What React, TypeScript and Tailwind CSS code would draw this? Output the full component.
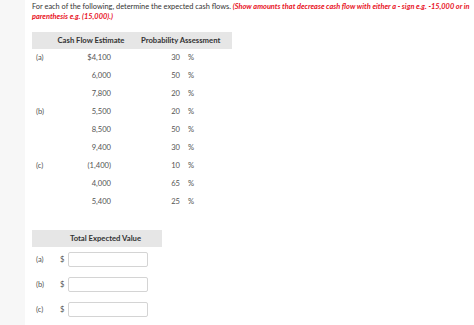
const rows = [
  { label: '(a)', value: '$4,100', pct: '30' },
  { label: '', value: '6,000', pct: '50' },
  { label: '', value: '7,800', pct: '20' },
  { label: '(b)', value: '5,500', pct: '20' },
  { label: '', value: '8,500', pct: '50' },
  { label: '', value: '9,400', pct: '30' },
  { label: '(c)', value: '(1,400)', pct: '10' },
  { label: '', value: '4,000', pct: '65' },
  { label: '', value: '5,400', pct: '25' },
];

const totals = ['(a)', '(b)', '(c)'];

const App = () => {
  return (
    <div className="flex h-[325px] w-[474px] overflow-hidden bg-white font-['Lato','Liberation_Sans',sans-serif] text-[#333]">
      <div className="w-[25px] shrink-0 bg-[#f7f7f7]"></div>
      <div className="flex-1 pl-[7px] pr-[4px] pt-[2px]">
        <p className="text-[7.4px] leading-[10px]">
          For each of the following, determine the expected cash flows.{' '}
          <span className="font-bold italic text-[#e8121e]">
            (Show amounts that decrease cash flow with either a - sign e.g. -15,000 or in parenthesis e.g. (15,000).)
          </span>
        </p>

        <div className="mt-[10px] w-[200px]">
          <div className="flex h-[17px] items-center whitespace-nowrap bg-[#e6e6e6] text-[7.7px] font-bold text-[#333]">
            <div className="w-[24px]"></div>
            <div className="w-[70px] text-center">Cash Flow Estimate</div>
            <div className="pl-[15px]">Probability Assessment</div>
          </div>
          {rows.map((r, i) => (
            <div key={i} className="flex h-[18px] items-center text-[7.6px] text-[#555]">
              <div className="w-[24px] pl-[4px]">{r.label}</div>
              <div className="w-[55px] text-right">{r.value}</div>
              <div className="w-[69px] text-right">{r.pct}</div>
              <div className="pl-[8px]">%</div>
            </div>
          ))}
        </div>

        <div className="mt-[19px] w-[130px]">
          <div className="flex h-[17px] items-center justify-center bg-[#e6e6e6] pl-[17px] text-[7.7px] font-bold text-[#333]">
            Total Expected Value
          </div>
          <div className="flex flex-col gap-[10px] pt-[5px]">
            {totals.map((t) => (
              <div key={t} className="flex h-[15px] items-center text-[7.6px] text-[#555]">
                <div className="w-[28px] pl-[4px]">{t}</div>
                <div className="w-[8px]">$</div>
                <input
                  type="text"
                  className="h-[15px] w-[80px] rounded-[2px] border border-[#d4d4d4] bg-white"
                />
              </div>
            ))}
          </div>
        </div>
      </div>
    </div>
  );
};

export default App;
